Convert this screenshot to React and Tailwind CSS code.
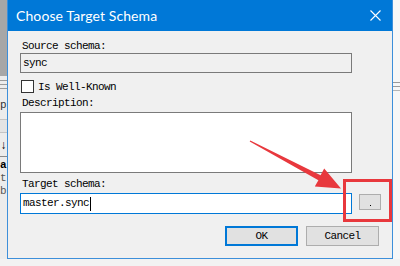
import React from "react";

const mono = { fontFamily: '"Liberation Mono", "DejaVu Sans Mono", monospace' };

const Label = ({ children }) => (
    <div className="ml-[2px] h-[12px] text-[11px] leading-[12px] tracking-[-0.6px] text-black">{children}</div>
);

const App = () => {
    return (
        <div className="relative w-[400px] h-[266px] overflow-hidden bg-[#f2f2f2] flex flex-col" style={mono}>
            <div className="flex h-[259px]">
                {/* window behind, left edge */}
                <div className="w-[7px] flex flex-col bg-[#ececec]">
                    <div className="h-[76px] bg-[#a7a7a7]" />
                    <div className="mt-[4px] h-px bg-[#9a9a9a]" />
                    <div className="mt-[3px] h-px bg-[#9a9a9a]" />
                    <div className="mt-[3px] h-px bg-[#9a9a9a]" />
                    <div className="mt-[10px] text-[11px] leading-[12px] text-[#333]">p</div>
                    <div className="mt-[8px] h-[14px] border-y border-[#c4c4c4] bg-[#e4e4e4]" />
                    <div className="mt-[6px] text-[12px] leading-[14px] font-bold text-black">↓</div>
                    <div className="mt-[3px] h-px bg-[#8a8a8a]" />
                    <div className="mt-[2px] text-[11px] leading-[12px] font-bold text-black">a</div>
                    <div className="mt-[1px] text-[11px] leading-[12px] text-[#555]">t</div>
                    <div className="mt-[1px] text-[11px] leading-[12px] text-[#555]">b</div>
                </div>

                {/* dialog */}
                <div className="w-[386px] h-[259px] border-x border-b border-[#3d8fda] bg-[#f0f0f0] flex flex-col">
                    <div className="h-[31px] bg-[#0078d7] flex items-center justify-between pl-[8px] pr-[10px]">
                        <span className="text-[14px] tracking-[0.1px] text-white" style={{ fontFamily: 'Lato, "Noto Sans", sans-serif' }}>
                            Choose Target Schema
                        </span>
                        <svg width="11" height="11" viewBox="0 0 11 11" className="mr-px">
                            <path d="M0.5 0.5L10.5 10.5M10.5 0.5L0.5 10.5" stroke="white" strokeWidth="1.1" />
                        </svg>
                    </div>

                    <div className="flex flex-col pl-[12px]">
                        <div className="mt-[9px]">
                            <Label>Source schema:</Label>
                        </div>
                        <div className="mt-[1px] w-[332px] h-[20px] border border-[#7a7a7a] bg-[#f0f0f0] flex items-center pl-[2px] text-[11px] tracking-[-0.6px]">
                            sync
                        </div>

                        <div className="mt-[7px] h-[13px] flex items-center gap-[4px] pl-px">
                            <div className="w-[13px] h-[13px] border border-[#333] bg-white" />
                            <span className="text-[11px] leading-[12px] tracking-[-0.6px]">Is Well-Known</span>
                        </div>

                        <div className="mt-[4px]">
                            <Label>Description:</Label>
                        </div>
                        <div className="mt-[3px] w-[332px] h-[61px] border border-[#7a7a7a] bg-white" />

                        <div className="mt-[5px]">
                            <Label>Target schema:</Label>
                        </div>
                        <div className="mt-[3px] flex items-start gap-[7px]">
                            <div className="w-[332px] h-[21px] border border-[#0078d7] bg-white flex items-center pl-[2px] text-[11px] tracking-[-0.6px]">
                                master.sync
                                <span className="ml-[1px] w-px h-[14px] bg-black" />
                            </div>
                            <button className="mt-[1px] w-[22px] h-[16px] border border-[#adadad] bg-[#e1e1e1] flex items-end justify-center pb-[3px]">
                                <span className="w-px h-px bg-black" />
                            </button>
                        </div>

                        <div className="mt-[12px] flex justify-end gap-[8px] pr-[13px]">
                            <button className="w-[73px] h-[20px] border-2 border-[#0078d7] bg-[#e1e1e1] text-[11px] leading-[14px] tracking-[-0.6px] text-black">
                                OK
                            </button>
                            <button className="w-[73px] h-[20px] border border-[#adadad] bg-[#e1e1e1] text-[11px] leading-[14px] tracking-[-0.6px] text-black">
                                Cancel
                            </button>
                        </div>
                    </div>
                </div>

                {/* window behind, right edge */}
                <div className="w-[7px] flex flex-col bg-[#f7f7f7]">
                    <div className="mt-[82px] h-px bg-[#9a9a9a]" />
                    <div className="mt-[3px] h-px bg-[#9a9a9a]" />
                    <div className="mt-[3px] h-px bg-[#b5b5b5]" />
                </div>
            </div>

            {/* annotation: red arrow and box */}
            <svg className="absolute left-0 top-0 pointer-events-none" width="400" height="266" viewBox="0 0 400 266">
                <polygon
                    points="250.3,140.4 320.6,175.2 324.2,168.4 341,188.5 314.8,186.6 318.4,180.2 249.7,141.6"
                    fill="#e8383d"
                />
            </svg>
            <div className="absolute left-[343px] top-[179px] w-[49px] h-[43px] border-[3px] border-[#e8383d]" />
        </div>
    );
};

export default App;
